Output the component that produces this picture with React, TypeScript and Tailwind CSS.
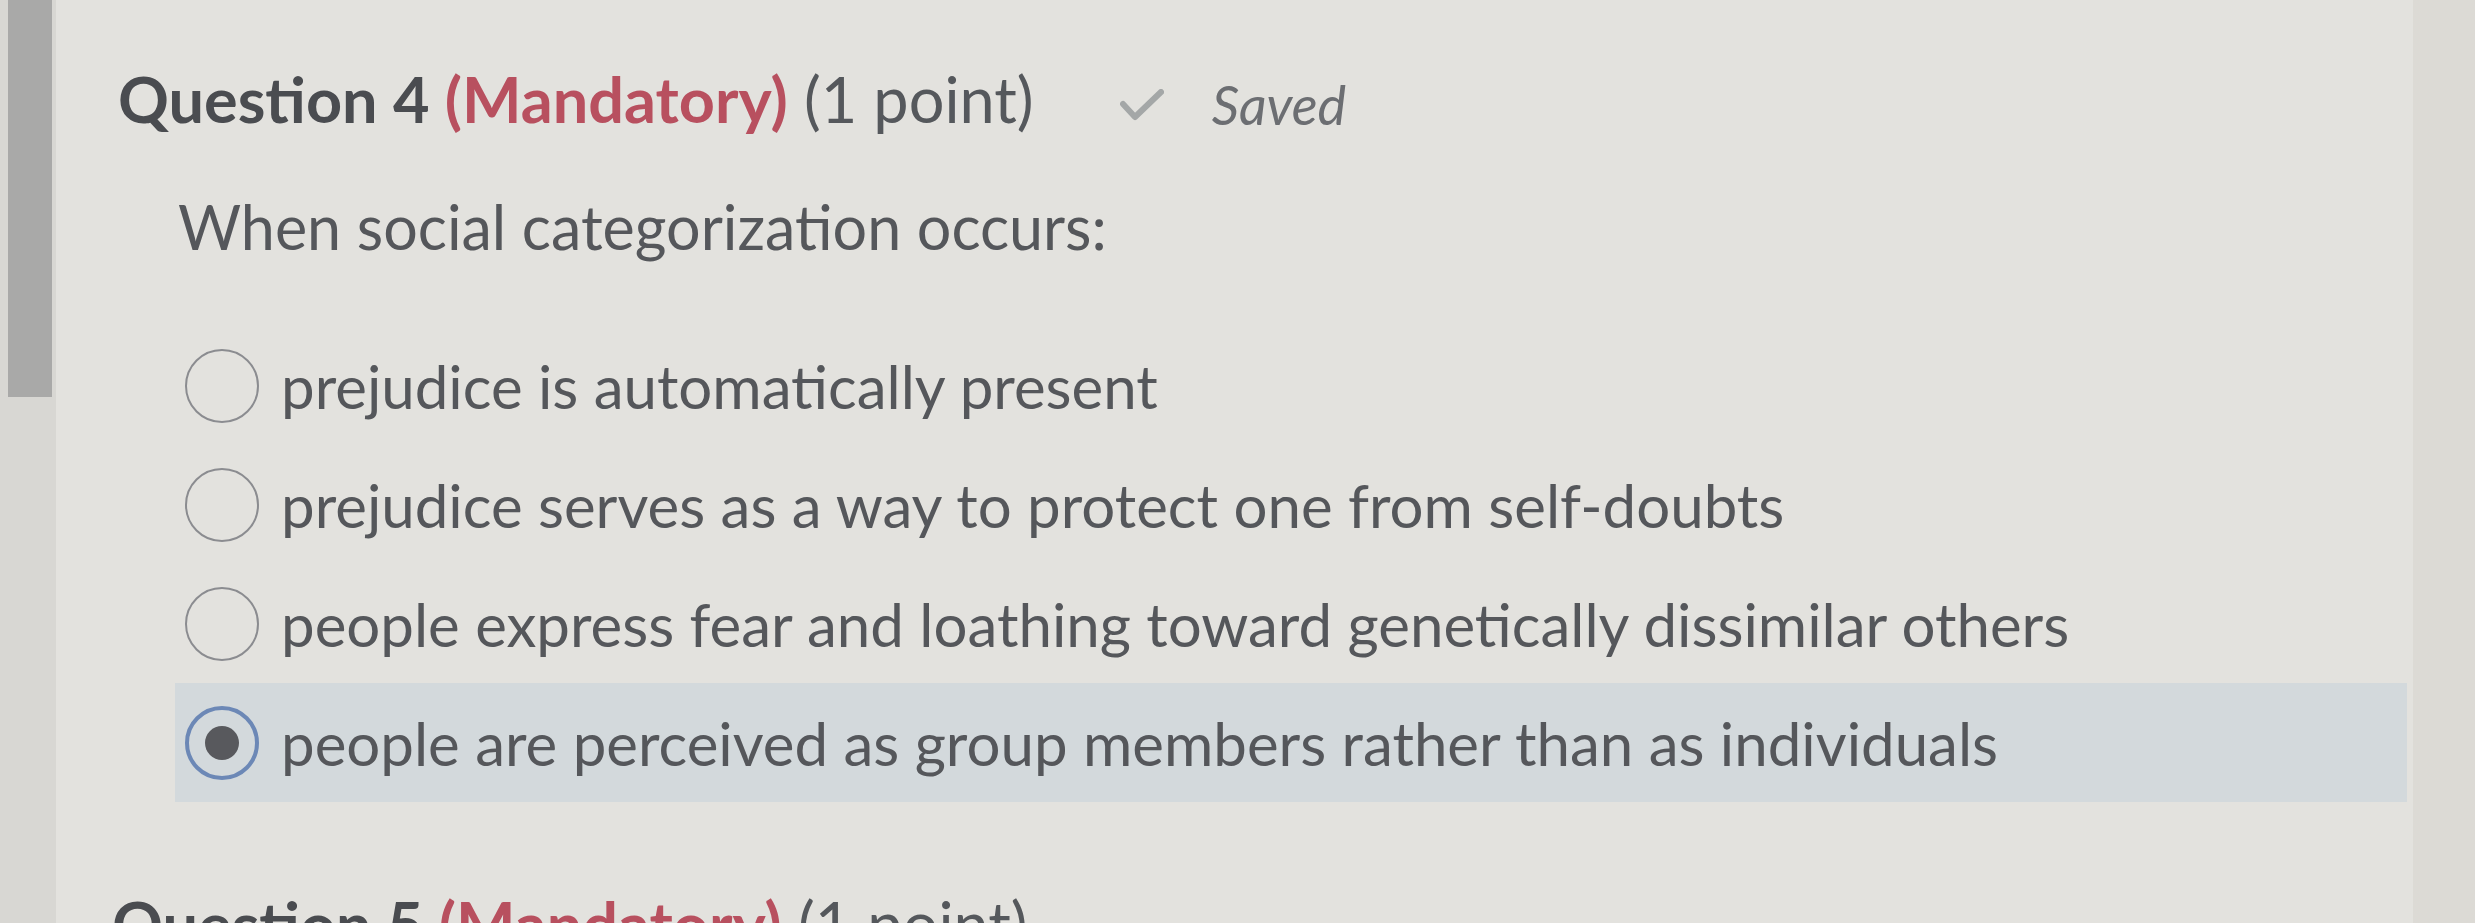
const options = [
  'prejudice is automatically present',
  'prejudice serves as a way to protect one from self-doubts',
  'people express fear and loathing toward genetically dissimilar others',
  'people are perceived as group members rather than as individuals',
];

const selectedIndex = 3;

function QuestionHeading({ num }: { num: number }) {
  return (
    <h2 className="text-[63px] leading-[76px] text-[#4a4c50] whitespace-nowrap">
      <span className="font-bold">Question {num} </span>
      <span className="font-bold text-[#b8505f]">(Mandatory)</span>
      <span className="font-normal text-[#55585c]"> (1 point)</span>
    </h2>
  );
}

function Radio({ checked }: { checked: boolean }) {
  if (checked) {
    return (
      <span className="flex h-[74px] w-[74px] shrink-0 items-center justify-center rounded-full border-[4px] border-[#6c88b6]">
        <span className="h-[34px] w-[34px] rounded-full bg-[#58595d]" />
      </span>
    );
  }
  return <span className="h-[74px] w-[74px] shrink-0 rounded-full border-[2.5px] border-[#8b8c90]" />;
}

export default function App() {
  return (
    <div
      className="flex h-screen w-full overflow-hidden bg-[#e3e2de]"
      style={{ fontFamily: 'Lato, "Open Sans", sans-serif' }}
    >
      {/* left nav strip */}
      <div className="w-[56px] shrink-0 bg-[#d8d7d3] pl-[8px]">
        <div className="h-[397px] w-[44px] bg-[#a9a9a8]" />
      </div>

      <main className="flex-1 pl-[62px] pt-[61px]">
        <div className="flex items-center">
          <QuestionHeading num={4} />
          <div className="ml-[86px] flex items-center gap-[48px] pt-[12px]">
            <svg width="44" height="32" viewBox="0 0 44 32" fill="none">
              <polyline
                points="3,15 15,28 41,3"
                stroke="#a4a7a7"
                strokeWidth="6"
                strokeLinecap="round"
                strokeLinejoin="round"
              />
            </svg>
            <span className="text-[54px] leading-none italic text-[#6c6e72]">Saved</span>
          </div>
        </div>

        <p className="mt-[53px] ml-[60px] text-[61px] leading-[73px] text-[#55575b]">
          When social categorization occurs:
        </p>

        <div className="mt-[63px] ml-[57px] w-[2232px]">
          {options.map((opt, i) => (
            <div
              key={opt}
              className={`flex h-[119px] items-center gap-[22px] pl-[10px] ${
                i === selectedIndex ? 'bg-[#d3d9dc]' : ''
              }`}
            >
              <Radio checked={i === selectedIndex} />
              <span className="text-[60px] leading-[72px] text-[#55575b] whitespace-nowrap">{opt}</span>
            </div>
          ))}
        </div>

        <div className="mt-[84px] -ml-[6px]">
          <QuestionHeading num={5} />
        </div>
      </main>

      {/* right edge */}
      <div className="w-[62px] shrink-0 bg-[#dcdad5]" />
    </div>
  );
}
